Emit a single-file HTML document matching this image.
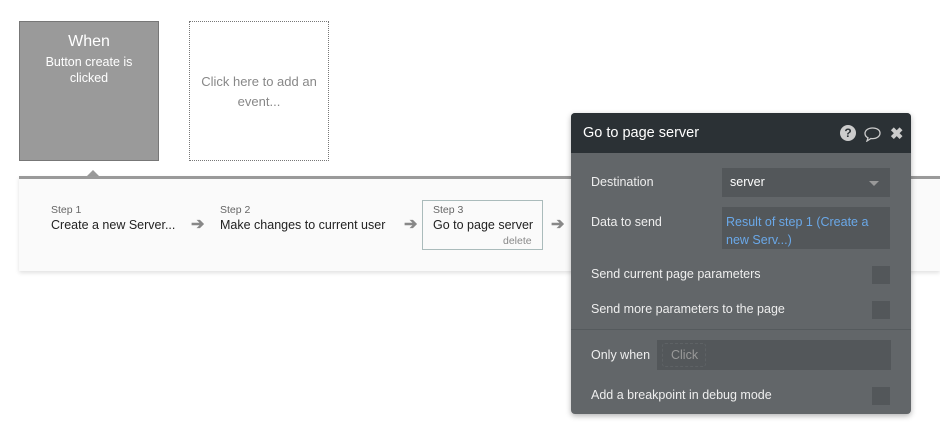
<!DOCTYPE html>
<html><head><meta charset="utf-8"><style>
*{box-sizing:border-box;margin:0;padding:0}
body{width:940px;height:442px;background:#fff;font-family:"Liberation Sans",sans-serif;position:relative;overflow:hidden;color:#333}
.abs{position:absolute}
.when{left:19px;top:21px;width:140px;height:140px;background:#9a9a9a;border:1px solid #777;color:#fff;text-align:center}
.add{left:189px;top:21px;width:140px;height:140px;border:1px dotted #777;color:#888;text-align:center;font-size:13px;line-height:20px;padding-top:50px}
.bar{left:19px;top:176px;width:921px;height:95px;background:#fafafa;border-top:3px solid #9a9a9a;box-shadow:0 2px 4px rgba(0,0,0,.12)}
.lbl{font-size:10.5px;color:#666}
.st{font-size:12.5px;color:#222}
.arr{color:#888;font-size:16px;font-weight:bold}
.pop{left:571px;top:113px;width:340px;height:301px;background:#626669;border-radius:4px;box-shadow:0 2px 6px rgba(0,0,0,.3);overflow:hidden;color:#eee;font-size:12.5px}
.hd{height:40px;background:#2b3135;padding:12px 12px;font-size:14.5px;color:#fff}
.cb{width:18px;height:18px;background:#53575a}
.fld{background:#53575a}
</style></head><body>
<div class="abs when"><div style="font-size:16px;margin-top:11px">When</div><div style="font-size:12.5px;line-height:16px;margin-top:3px">Button create is<br>clicked</div></div>
<div class="abs add">Click here to add an<br>event...</div>
<div class="abs" style="left:86px;top:170px;width:0;height:0;border-left:7px solid transparent;border-right:7px solid transparent;border-bottom:7px solid #9a9a9a"></div>
<div class="abs bar"></div>
<div class="abs lbl" style="left:51px;top:204px">Step 1</div>
<div class="abs st" style="left:51px;top:218px">Create a new Server...</div>
<div class="abs arr" style="left:191px;top:214px">➔</div>
<div class="abs lbl" style="left:220px;top:204px">Step 2</div>
<div class="abs st" style="left:220px;top:218px">Make changes to current user</div>
<div class="abs arr" style="left:404px;top:214px">➔</div>
<div class="abs" style="left:422px;top:200px;width:121px;height:50px;border:1px solid #aabbbb;background:#fafafa"></div>
<div class="abs lbl" style="left:433px;top:204px">Step 3</div>
<div class="abs st" style="left:433px;top:218px">Go to page server</div>
<div class="abs lbl" style="left:503px;top:235px;color:#888">delete</div>
<div class="abs arr" style="left:551px;top:214px">➔</div>
<div class="abs pop">
<div class="hd">Go to page server
<span style="position:absolute;left:269px;top:12px;width:16px;height:16px;border-radius:50%;background:#ccc;color:#2b3135;font-size:12px;font-weight:bold;text-align:center;line-height:16px">?</span>
<svg style="position:absolute;left:292px;top:13px" width="19" height="16"><path d="M9.5 2C5 2 2 4.5 2 7.5c0 2 1.3 3.5 3 4.3L4 15l4-2.5c.5.1 1 .1 1.5.1 4.5 0 7.5-2.5 7.5-5.5S14 2 9.5 2z" fill="none" stroke="#ccc" stroke-width="1.3"/></svg>
<span style="position:absolute;left:319px;top:11px;font-size:16px;font-weight:bold;color:#ccc">✖</span>
</div>
<div class="abs" style="left:20px;top:62px">Destination</div>
<div class="abs fld" style="left:151px;top:55px;width:168px;height:29px;padding:7px 8px;color:#fff">server<span style="position:absolute;right:11px;top:13px;border-left:5px solid transparent;border-right:5px solid transparent;border-top:5px solid #999"></span></div>
<div class="abs" style="left:20px;top:102px">Data to send</div>
<div class="abs fld" style="left:151px;top:94px;width:168px;height:42px;padding:0 4px;color:#6aa8e8;line-height:18px;padding-top:6px">Result of step 1 (Create a new Serv...)</div>
<div class="abs" style="left:20px;top:154px">Send current page parameters</div>
<div class="abs cb" style="left:301px;top:153px"></div>
<div class="abs" style="left:20px;top:189px">Send more parameters to the page</div>
<div class="abs cb" style="left:301px;top:188px"></div>
<div class="abs" style="left:0;top:216px;width:340px;height:1px;background:#555a5d"></div>
<div class="abs" style="left:20px;top:235px">Only when</div>
<div class="abs fld" style="left:86px;top:227px;width:234px;height:30px"><span style="position:absolute;left:5px;top:3px;width:44px;height:24px;border:1px dashed #5e6265;border-radius:3px;color:#999;padding:4px 8px">Click</span></div>
<div class="abs" style="left:20px;top:275px">Add a breakpoint in debug mode</div>
<div class="abs cb" style="left:301px;top:274px"></div>
</div>
</body></html>
